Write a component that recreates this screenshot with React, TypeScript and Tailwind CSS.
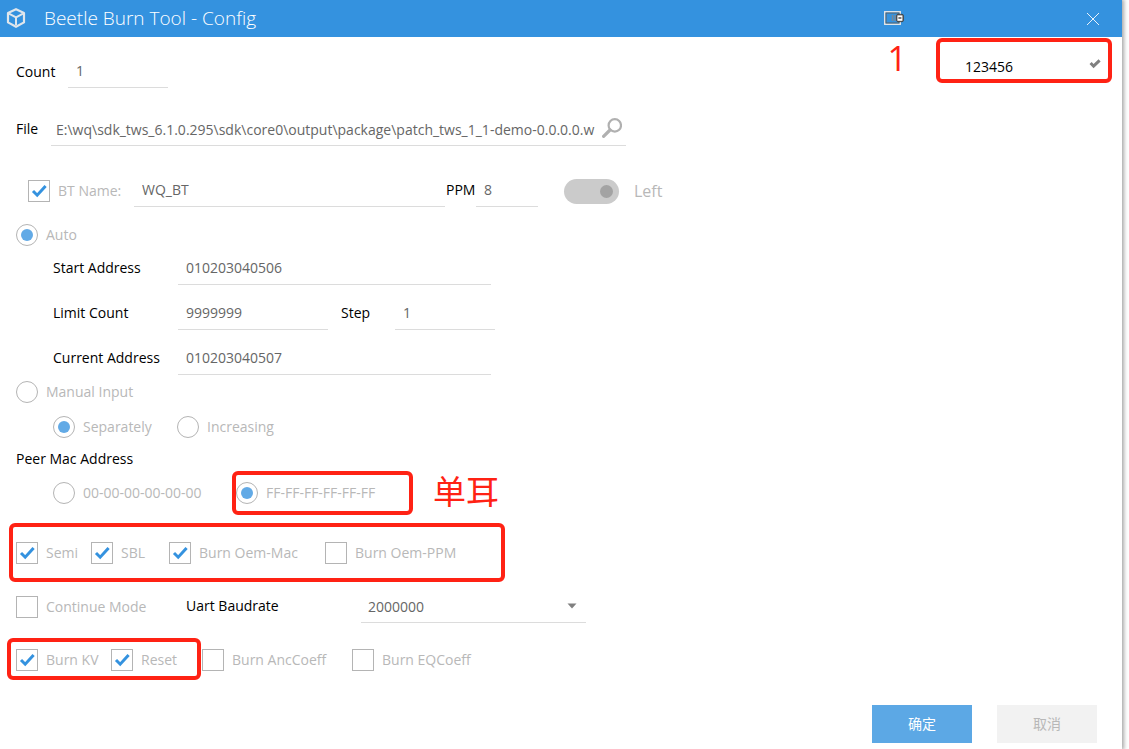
import { ReactNode } from "react";
import clsx from "clsx";

interface ChoiceProps {
  label: string;
  checked?: boolean;
  name?: string;
  className?: string;
}

interface FieldProps {
  id: string;
  value: string;
  label?: string;
  className?: string;
}

function Checkbox({ label, checked, className }: ChoiceProps) {
  return (
    <label className={clsx("flex shrink-0 items-center gap-2 whitespace-nowrap text-[#b8b8b8]", className)}>
      <span className="grid size-[22px] shrink-0">
        <input
          type="checkbox"
          defaultChecked={checked}
          className="peer col-start-1 row-start-1 size-[22px] appearance-none border border-[#b4b4b4] bg-white"
        />
        <svg
          viewBox="0 0 22 22"
          className="pointer-events-none invisible col-start-1 row-start-1 size-[22px] peer-checked:visible"
        >
          <path d="M5 11 9.2 15.2 17.6 6" fill="none" stroke="#3492df" strokeWidth="3" />
        </svg>
      </span>
      {label}
    </label>
  );
}

function Radio({ label, checked, name, className }: ChoiceProps) {
  return (
    <label className={clsx("flex shrink-0 items-center gap-2 whitespace-nowrap text-[#b8b8b8]", className)}>
      <span className="grid size-[22px] shrink-0 place-items-center">
        <input
          type="radio"
          name={name}
          defaultChecked={checked}
          className="peer col-start-1 row-start-1 size-[22px] appearance-none rounded-full border border-[#b4b4b4] bg-white"
        />
        <span className="pointer-events-none invisible col-start-1 row-start-1 size-3 rounded-full bg-[#62aae6] peer-checked:visible" />
      </span>
      {label}
    </label>
  );
}

function Field({ id, value, label, className }: FieldProps) {
  return (
    <input
      id={id}
      type="text"
      aria-label={label}
      defaultValue={value}
      className={clsx(
        "h-8 min-w-0 border-b border-[#dcdcdc] bg-transparent pb-[2px] pl-2 text-[#666] outline-none",
        className
      )}
    />
  );
}

// red marker frame drawn over a group of controls
function Marked({ children, frame, className }: { children: ReactNode; frame: string; className?: string }) {
  return (
    <div className={clsx("relative flex", className)}>
      {children}
      <span className={clsx("pointer-events-none absolute rounded-md border-4 border-[#ff2214]", frame)} />
    </div>
  );
}

function TitleBar() {
  return (
    <header className="flex h-[37px] items-center bg-[#3492df] pl-[6px] pr-[22px] text-white">
      <svg viewBox="0 0 20 20" className="mb-[2px] size-5" fill="none" stroke="#dfe6ec" strokeWidth="2.2" strokeLinejoin="round">
        <path d="M10 1.2 18 5V14.4L10 18.8 2 14.4V5Z" />
        <path d="M3 5.6 10 9.4 17 5.6M10 9.4V17" strokeWidth="2" />
      </svg>
      <h1 className="ml-[18px] text-[19px] font-light whitespace-nowrap">Beetle Burn Tool - Config</h1>
      <button type="button" aria-label="Device" className="mr-[182px] mb-[2px] ml-auto">
        <svg viewBox="0 0 20 14" className="h-[14px] w-5">
          <rect x="0.8" y="0.8" width="15.4" height="12.4" fill="#3492df" stroke="#e9e9e9" strokeWidth="1.5" />
          <rect x="2" y="2" width="13" height="10" fill="none" stroke="#55606a" strokeWidth="1" />
          <path d="M8.5 4V10M11 4V10" stroke="#7b8792" strokeWidth="1.4" />
          <rect x="12.5" y="3.3" width="7" height="7.4" rx="1.6" fill="#555" stroke="#444" strokeWidth="0.8" />
          <rect x="13.4" y="4.4" width="5" height="5.4" fill="#fff" />
          <path d="M14.4 7H17.4" stroke="#444" strokeWidth="1.4" />
        </svg>
      </button>
      <button type="button" aria-label="Close">
        <svg viewBox="0 0 14 14" className="size-[14px]" fill="none" stroke="#e8f2fb" strokeWidth="1">
          <path d="M1 1 13 13M13 1 1 13" />
        </svg>
      </button>
    </header>
  );
}

export default function App() {
  return (
    <div className="min-h-screen bg-white pr-[7px] font-['Open_Sans','Noto_Sans_CJK_SC',sans-serif] text-sm text-black">
      <div className="min-h-screen overflow-x-clip bg-white shadow-[1px_0_4px_1px_rgba(0,0,0,0.35)]">
        <TitleBar />
        <form className="flex flex-col pb-[6px] pl-4">
          <div className="flex items-start justify-between pt-px">
            <div className="mt-[18px] flex items-center">
              <label htmlFor="count" className="w-[52px]">Count</label>
              <Field id="count" value="1" className="w-[100px]" />
            </div>
            <div className="mr-[10px] flex items-start">
              <span className="mr-[29px] text-[34px] leading-10 text-[#ff2214]">1</span>
              <Marked frame="inset-0" className="h-[45px] w-[176px] items-center pt-[11px] pr-[11px] pl-[29px]">
                <input
                  type="text"
                  aria-label="Password"
                  defaultValue="123456"
                  className="h-6 min-w-0 flex-1 bg-transparent outline-none"
                />
                <button type="button" aria-label="Confirm" className="pb-1">
                  <svg viewBox="0 0 12 12" className="size-3" fill="none" stroke="#808080" strokeWidth="3">
                    <path d="M1.6 5 4.6 8.2 10.6 2.4" />
                  </svg>
                </button>
              </Marked>
            </div>
          </div>

          <div className="mt-[26px] flex items-center">
            <label htmlFor="file" className="w-[35px] pb-[2px]">File</label>
            <div className="flex h-8 w-[575px] items-center gap-1 border-b border-[#dcdcdc] pr-1 pl-[5px]">
              <input
                id="file"
                type="text"
                defaultValue="E:\wq\sdk_tws_6.1.0.295\sdk\core0\output\package\patch_tws_1_1-demo-0.0.0.0.w"
                className="mr-px min-w-0 flex-1 bg-transparent text-[#666] outline-none"
              />
              <button type="button" aria-label="Browse" className="pb-1">
                <svg viewBox="0 0 20 20" className="size-5" fill="none" stroke="#b0b0b0">
                  <circle cx="12.8" cy="7.4" r="6.2" strokeWidth="2.2" />
                  <path d="M8 12 1.6 18.4" strokeWidth="3.2" strokeLinecap="round" />
                </svg>
              </button>
            </div>
          </div>

          <div className="mt-[29px] flex items-center pl-3">
            <Checkbox label="BT Name:" checked className="w-[106px]" />
            <Field id="bt-name" label="BT Name" value="WQ_BT" className="w-[311px]" />
            <label htmlFor="ppm" className="ml-px w-[30px] pb-[2px]">PPM</label>
            <Field id="ppm" value="8" className="w-[62px]" />
            <label className="ml-[26px] flex items-center gap-[15px] text-base text-[#b8b8b8]">
              <span className="grid items-center">
                <input
                  type="checkbox"
                  role="switch"
                  defaultChecked
                  className="col-start-1 row-start-1 h-[25px] w-[55px] appearance-none rounded-full bg-[#cbcbcb]"
                />
                <span className="pointer-events-none col-start-1 row-start-1 mr-[6px] size-[13px] justify-self-end rounded-full bg-[#a3a3a3]" />
              </span>
              Left
            </label>
          </div>

          <Radio label="Auto" name="mode" checked className="mt-[17px] h-[22px]" />
          <div className="mt-[7px] flex flex-col gap-[13px] pl-[37px]">
            <div className="flex items-center">
              <label htmlFor="start" className="w-[125px] pb-[2px]">Start Address</label>
              <Field id="start" value="010203040506" className="w-[313px]" />
            </div>
            <div className="flex items-center">
              <label htmlFor="limit" className="w-[125px] pb-[2px]">Limit Count</label>
              <Field id="limit" value="9999999" className="w-[150px]" />
              <label htmlFor="step" className="ml-[13px] w-[54px] pb-[2px]">Step</label>
              <Field id="step" value="1" className="w-[100px]" />
            </div>
            <div className="flex items-center">
              <label htmlFor="current" className="w-[125px] pb-[2px]">Current Address</label>
              <Field id="current" value="010203040507" className="w-[313px]" />
            </div>
          </div>

          <Radio label="Manual Input" name="mode" className="mt-[6px] h-[22px]" />
          <div className="mt-[13px] flex h-[22px] pl-[37px]">
            <Radio label="Separately" name="manual" checked className="w-[124px]" />
            <Radio label="Increasing" name="manual" />
          </div>

          <p className="mt-[10px] leading-[22px]">Peer Mac Address</p>
          <div className="mt-3 flex h-[22px] items-center pl-[37px]">
            <Radio label="00-00-00-00-00-00" name="peer" className="w-[183px]" />
            <Marked frame="-top-[11px] -right-[10px] -bottom-[11px] -left-1" className="w-[167px]">
              <Radio label="FF-FF-FF-FF-FF-FF" name="peer" checked />
            </Marked>
            <span className="ml-[30px] pb-[6px] font-['Noto_Sans_CJK_SC',sans-serif] text-[33px] leading-10 text-[#ff2214]">单耳</span>
          </div>

          <div className="mt-[38px] flex">
            <Marked frame="-top-[19px] right-0 -bottom-[18px] -left-[7px]" className="w-[489px]">
              <Checkbox label="Semi" checked className="w-[75px]" />
              <Checkbox label="SBL" checked className="w-[78px]" />
              <Checkbox label="Burn Oem-Mac" checked className="w-[156px]" />
              <Checkbox label="Burn Oem-PPM" />
            </Marked>
          </div>

          <div className="mt-[27px] flex items-center">
            <Checkbox label="Continue Mode" className="w-[170px]" />
            <label htmlFor="baudrate" className="w-[175px] pb-[2px]">Uart Baudrate</label>
            <div className="grid w-[225px] items-center">
              <select
                id="baudrate"
                defaultValue="2000000"
                className="col-start-1 row-start-1 h-8 appearance-none border-b border-[#dcdcdc] bg-transparent pl-[7px] text-[#666] outline-none"
              >
                <option>2000000</option>
              </select>
              <svg
                viewBox="0 0 10 6"
                className="pointer-events-none col-start-1 row-start-1 mr-[9px] mb-[2px] h-[6px] w-[10px] justify-self-end"
              >
                <path d="M0.5 0.5H9.5L5 5.5Z" fill="#808080" />
              </svg>
            </div>
          </div>

          <div className="mt-[26px] flex">
            <Marked frame="-top-[11px] right-0 -bottom-[9px] -left-[9px]" className="w-[185px]">
              <Checkbox label="Burn KV" checked className="w-[95px]" />
              <Checkbox label="Reset" checked />
            </Marked>
            <Checkbox label="Burn AncCoeff" className="ml-px w-[150px]" />
            <Checkbox label="Burn EQCoeff" />
          </div>

          <div className="mt-[34px] mr-[25px] flex justify-end gap-[25px]">
            <button type="button" className="h-[38px] w-[100px] bg-[#5ca8e5] text-white">确定</button>
            <button type="button" className="h-[38px] w-[100px] bg-[#f2f2f2] text-[#b8b8b8]">取消</button>
          </div>
        </form>
      </div>
    </div>
  );
}
